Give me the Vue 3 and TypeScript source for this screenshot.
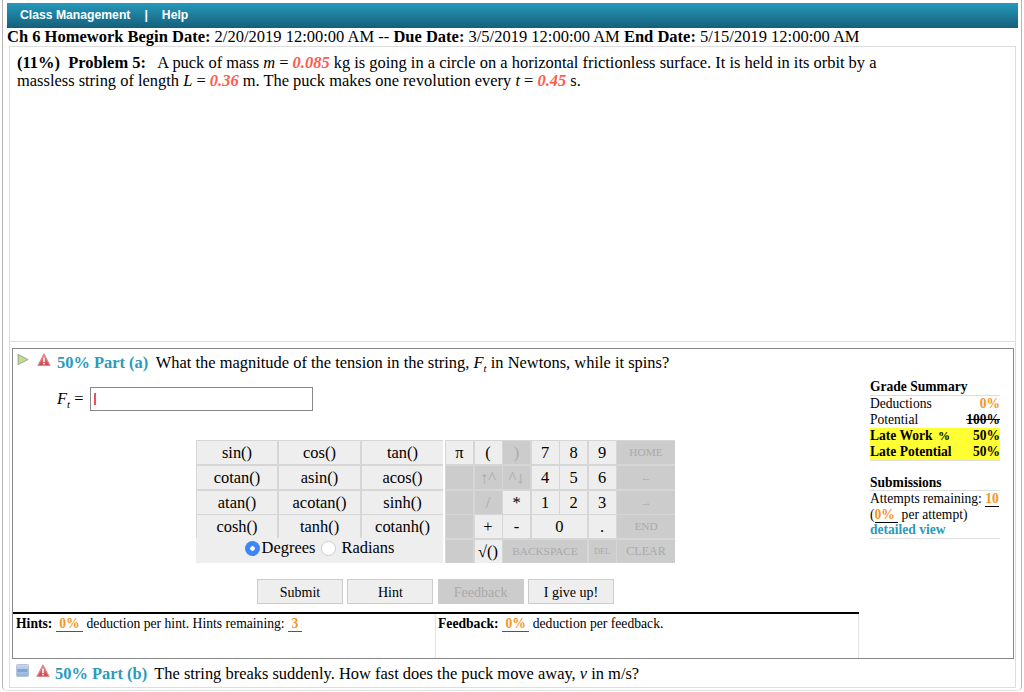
<script setup lang="ts">
interface Key { t: string; off?: boolean; span?: number; cls?: string }
const funcs: string[] = ['sin()','cos()','tan()','cotan()','asin()','acos()','atan()','acotan()','sinh()','cosh()','tanh()','cotanh()']
const keys: Key[] = [
  {t:'π'},{t:'('},{t:')',off:true},{t:'7'},{t:'8'},{t:'9'},{t:'HOME',off:true,cls:'sm'},
  {t:'',off:true},{t:'↑^',off:true},{t:'^↓',off:true},{t:'4'},{t:'5'},{t:'6'},{t:'←',off:true,cls:'sm'},
  {t:'',off:true},{t:'/',off:true},{t:'*'},{t:'1'},{t:'2'},{t:'3'},{t:'→',off:true,cls:'sm'},
  {t:'',off:true},{t:'+'},{t:'-'},{t:'0',span:2},{t:'.'},{t:'END',off:true,cls:'sm'},
  {t:'',off:true},{t:'√()'},{t:'BACKSPACE',off:true,span:3,cls:'sm'},{t:'DEL',off:true,cls:'xs'},{t:'CLEAR',off:true,cls:'md'}
]
</script>

<template>
  <div class="window">
    <div class="topbar"><span>Class Management</span><span class="sep">|</span><span>Help</span></div>
    <div class="title"><b>Ch 6 Homework Begin Date:</b> 2/20/2019 12:00:00 AM -- <b>Due Date:</b> 3/5/2019 12:00:00 AM <b>End Date:</b> 5/15/2019 12:00:00 AM</div>
    <div class="problem">
      <div class="statement">
        <p><b>(11%)&nbsp; Problem 5:</b>&nbsp;&nbsp; A puck of mass <i>m</i> = <b class="val">0.085</b> kg is going in a circle on a horizontal frictionless surface. It is held in its orbit by a<br>massless string of length <i>L</i> = <b class="val">0.36</b> m. The puck makes one revolution every <i>t</i> = <b class="val">0.45</b> s.</p>
      </div>
      <div class="part">
        <div class="part-main">
          <div class="work">
            <div class="part-head">
              <svg class="play" width="12" height="13" viewBox="0 0 12 13"><path d="M1.2 1.5 L10.8 6.5 L1.2 11.5 Z" fill="#c6de8c" stroke="#a3b594" stroke-width="1.3" stroke-linejoin="round"/></svg>
              <svg class="warn" width="14" height="14" viewBox="0 0 14 14"><defs><linearGradient id="wr" x1="0" y1="0" x2="0" y2="1"><stop offset="0" stop-color="#e88489"/><stop offset="1" stop-color="#d2434b"/></linearGradient></defs><path d="M7 1 L13 12.5 H1 Z" fill="url(#wr)" stroke="#dc8a8e" stroke-width="1.2" stroke-linejoin="round"/><rect x="6.2" y="4.5" width="1.6" height="4.5" fill="#fff"/><rect x="6.2" y="9.8" width="1.6" height="1.6" fill="#fff"/></svg>
              <b class="pct">50% Part (a)</b>
              <span class="q">What the magnitude of the tension in the string, <i>F<sub>t</sub></i> in Newtons, while it spins?</span>
            </div>
            <div class="answer">
              <span class="lbl"><i>F<sub>t</sub></i> =</span>
              <div class="input"><span class="caret"></span></div>
            </div>
            <div class="pad">
              <div class="funcs">
                <div v-for="f in funcs" :key="f" class="fn">{{ f }}</div>
                <div class="radios">
                  <span class="radio on"></span><span>Degrees</span>
                  <span class="radio"></span><span class="rad">Radians</span>
                </div>
              </div>
              <div class="keys">
                <div v-for="(k, i) in keys" :key="i" class="key" :class="[{ off: k.off }, k.cls, k.span ? 'span' + k.span : '']">{{ k.t }}</div>
              </div>
            </div>
            <div class="buttons">
              <div class="btn">Submit</div><div class="btn">Hint</div><div class="btn dis">Feedback</div><div class="btn">I give up!</div>
            </div>
            <div class="info">
              <div class="hints"><b>Hints:</b> <span class="u"><b>&nbsp;0%&nbsp;</b></span> deduction per hint. Hints remaining: <span class="u"><b>&nbsp;3&nbsp;</b></span></div>
              <div class="feedback"><b>Feedback:</b> <span class="u"><b>&nbsp;0%&nbsp;</b></span> deduction per feedback.</div>
            </div>
          </div>
          <aside class="side">
            <div class="side-h">Grade Summary</div>
            <div class="row"><span>Deductions</span><b class="or">0%</b></div>
            <div class="row"><span>Potential</span><b><s>100%</s></b></div>
            <div class="late"><div class="row"><b>Late Work <span class="lp">%</span></b><b>50%</b></div><div class="row"><b>Late Potential</b><b>50%</b></div></div>
            <div class="side-h subs">Submissions</div>
            <div class="att">Attempts remaining: <span class="u"><b>10</b></span><br>(<span class="u"><b>0%&nbsp;</b></span> per attempt)<br><b class="detail">detailed view</b></div>
          </aside>
        </div>
      </div>
      <div class="part-b">
        <svg class="mini" width="13" height="13" viewBox="0 0 13 13"><defs><linearGradient id="bl" x1="0" y1="0" x2="0" y2="1"><stop offset="0" stop-color="#c9d8ec"/><stop offset="1" stop-color="#8fb2dc"/></linearGradient></defs><rect x="0.5" y="0.5" width="12" height="12" rx="1" fill="url(#bl)" stroke="#b4c4da"/><rect x="1.5" y="5" width="10" height="3" fill="#7fa5d4"/></svg>
        <svg class="warn2" width="14" height="14" viewBox="0 0 14 14"><path d="M7 1 L13 12.5 H1 Z" fill="url(#wr)" stroke="#dc8a8e" stroke-width="1.2" stroke-linejoin="round"/><rect x="6.2" y="4.5" width="1.6" height="4.5" fill="#fff"/><rect x="6.2" y="9.8" width="1.6" height="1.6" fill="#fff"/></svg>
        <b class="pct">50% Part (b)</b>
        <span class="q">The string breaks suddenly. How fast does the puck move away, <i>v</i> in m/s?</span>
      </div>
    </div>
  </div>
</template>

<style>
html, body { margin: 0; background: #fff; overflow: hidden; }
</style>

<style scoped>
.window { box-sizing: border-box; width: 1020px; height: 691px; margin-left: 2px; border: 1px solid #b5b5b5; border-top: 0; border-bottom-color: #ddd; border-radius: 0 0 5px 5px; padding: 3px 3px 0 4px; font-family: "Liberation Serif", serif; color: #000; font-size: 16.45px; background: #fff; overflow: hidden; }
.topbar { height: 25px; box-sizing: border-box; background: linear-gradient(#2699bb, #14607b); color: #fff; font: bold 12.2px/25px "Liberation Sans", sans-serif; padding-left: 13px; display: flex; }
.sep { margin: 0 14px; }
.title { height: 18px; line-height: 18px; font-size: 16.5px; white-space: nowrap; }
.problem { margin-left: 2px; margin-right: 2px; height: 642px; box-sizing: border-box; border: 1px solid #ddd; }
.statement { height: 295px; box-sizing: border-box; border-bottom: 1px solid #ddd; padding: 7px 0 0 7px; }
.statement p { margin: 0; line-height: 18px; white-space: nowrap; }
.val { color: #ff5a4c; font-style: italic; }
.part { margin: 6px 1px 0 2px; height: 311px; box-sizing: border-box; border: 1px solid #888; }
.part-main { display: flex; height: 100%; }
.work { width: 846px; flex: none; }
.part-head { height: 38px; display: flex; align-items: flex-start; padding: 4px 0 0 4px; box-sizing: border-box; white-space: pre; line-height: 20px; }
.warn { margin: 0 0 0 8px; }
.pct { color: #2a9bbb; margin-left: 6px; }
.q { margin-left: 7.5px; }
sub { font-size: 11px; line-height: 0; }
.answer { display: flex; align-items: center; height: 24px; padding-left: 44px; }
.lbl { width: 33px; flex: none; white-space: pre; }
.input { width: 223px; height: 24px; box-sizing: border-box; border: 1px solid #888; position: relative; }
.caret { position: absolute; left: 3px; top: 5px; width: 2px; height: 12px; background: #f0505c; }
.pad { display: flex; margin: 29px 0 0 183px; gap: 2px; width: 480px; }
.funcs { display: grid; grid-template-columns: 80px 81px 81px; column-gap: 2px; row-gap: 1.75px; background: #d6d6d6; padding: 1px 0 0 1px; width: 247px; box-sizing: border-box; }
.fn { background: #eee; height: 23px; line-height: 23px; text-align: center; }
.radios { grid-column: 1 / 4; margin-left: -1px; background: #eee; height: 25px; margin-top: -1.75px; display: flex; align-items: flex-start; justify-content: center; line-height: 20px; }
.radio { width: 15px; height: 15px; box-sizing: border-box; border-radius: 50%; background: #fff; border: 1px solid #ccc; margin: 3px 4px 0 6px; }
.radio.on { background: radial-gradient(circle, #fff 0 2px, #3d86f5 2.5px); border: 0; margin: 3px 2px 0 0; }
.rad { margin-left: 1px; }
.keys { display: grid; grid-template-columns: 27px 27px 27px 27px 27px 27px 58px; column-gap: 1.5px; row-gap: 1.75px; background: #d6d6d6; padding: 1px 0 0 1px; width: 230px; box-sizing: border-box; }
.key { background: #eee; height: 23px; line-height: 23px; text-align: center; white-space: nowrap; overflow: hidden; }
.key.off { background: #ccc; color: #aaa; }
.key.sm { font-size: 11.3px; }
.key.md { font-size: 12px; }
.key.xs { font-size: 8px; }
.span2 { grid-column: span 2; }
.span3 { grid-column: span 3; }
.buttons { display: flex; justify-content: center; gap: 4.33px; margin: 16px 0 0; padding-right: 1px; }
.btn { width: 86px; height: 25px; box-sizing: border-box; line-height: 25px; border: 1px solid #ccc; background: #eee; text-align: center; font-size: 14px; }
.btn.dis { background: #ccc; color: #aaa; }
.info { display: flex; margin-top: 8px; height: 46px; box-sizing: border-box; border-top: 2px solid #000; font-size: 13.65px; line-height: 20px; }
.hints { width: 419px; padding-left: 3px; white-space: pre-wrap; }
.feedback { flex: 1; border-left: 1px solid #e2e2e2; border-right: 1px solid #e2e2e2; padding-left: 2px; white-space: pre-wrap; }
.u { border-bottom: 1px solid #555; }
.u b { color: #f7931e; }
.side { width: 130px; margin: 30px 0 0 11px; font-size: 13.55px; line-height: 16px; flex: none; }
.side-h { font-weight: bold; border-bottom: 1px solid #ddd; }
.subs { margin-top: 14px; line-height: 15px; }
.row { display: flex; justify-content: space-between; }
.or { color: #f7931e; }
.late { background: #ff3; border-bottom: 1px solid #ddd; }
.lp { font-size: 12px; margin-left: 2px; }
.att { border-bottom: 1px solid #ddd; line-height: 15.5px; }
.att .u { border-bottom-color: #000; }
.detail { color: #2a9bbb; }
.part-b { display: flex; align-items: flex-start; padding: 5px 0 0 6px; white-space: pre; line-height: 20px; }
.warn2 { margin: 0 0 0 7px; }
.part-b .pct { margin-left: 5px; }
.part-b .q { margin-left: 7px; }
</style>
